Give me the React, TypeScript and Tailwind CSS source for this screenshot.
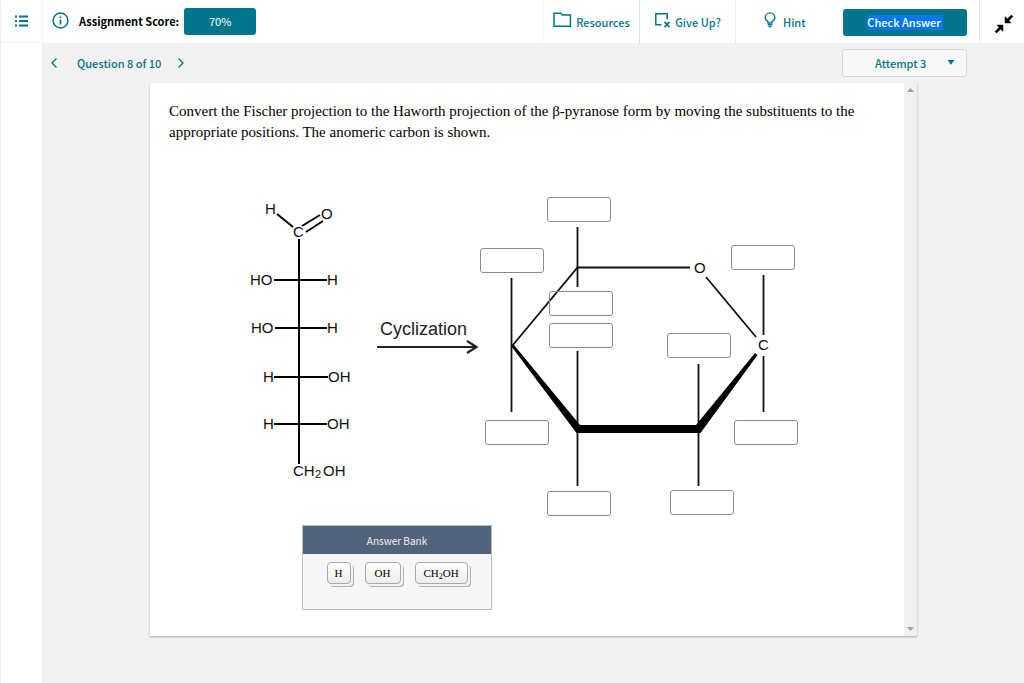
import React, { useState } from "react";

const slots = [
  { id: "c5-top", label: "C5 upper position", pos: "left-[307px] top-[7px]" },
  { id: "c4-top", label: "C4 upper position", pos: "left-[240px] top-[58px]" },
  { id: "c5-bottom", label: "C5 lower position", pos: "left-[309px] top-[101px]" },
  { id: "c3-top", label: "C3 upper position", pos: "left-[309px] top-[133px]" },
  { id: "c1-top", label: "C1 upper position", pos: "left-[491px] top-[55px]" },
  { id: "c2-top", label: "C2 upper position", pos: "left-[427px] top-[143px]" },
  { id: "c4-bottom", label: "C4 lower position", pos: "left-[245px] top-[230px]" },
  { id: "c1-bottom", label: "C1 lower position", pos: "left-[494px] top-[230px]" },
  { id: "c3-bottom", label: "C3 lower position", pos: "left-[307px] top-[301px]" },
  { id: "c2-bottom", label: "C2 lower position", pos: "left-[430px] top-[300px]" },
];

const bank = [
  { id: "h", content: <>H</>, size: "w-6" },
  { id: "oh", content: <>OH</>, size: "w-9" },
  {
    id: "ch2oh",
    content: (
      <>
        CH<sub className="text-[8px]">2</sub>OH
      </>
    ),
    size: "w-[53px]",
  },
];

function Header() {
  return (
    <header className="flex h-[43px] bg-white text-[11px] font-medium text-[#00758c]">
      <div className="flex flex-1 items-center pl-[9px]">
        <svg width="17" height="17" viewBox="0 0 17 17" fill="none" stroke="currentColor" className="mb-0.5">
          <circle cx="8.5" cy="8.5" r="7.4" strokeWidth="1.5" />
          <path d="M8.5 7.5v5M8.5 4.5v1.6" strokeWidth="1.7" />
        </svg>
        <span className="ml-[10px] font-bold text-black">Assignment Score:</span>
        <span className="ml-[5px] flex h-[27px] w-[72px] items-center justify-center rounded-[3px] bg-[#00758c] font-normal text-white">
          70%
        </span>
      </div>

      <nav className="flex">
        <a href="#resources" className="flex w-24 items-center justify-center border-l border-[#f5f5f5]">
          <svg width="19" height="16" viewBox="0 0 19 16" fill="none" stroke="currentColor" strokeWidth="1.5" className="mr-1 mb-1">
            <path d="M1 14.2V1.2h6.8l1.4 1.7h8.2v11.3z" />
          </svg>
          <span className="pt-0.5">Resources</span>
        </a>
        <a href="#give-up" className="flex w-24 items-center justify-center border-l border-[#dfdfdf]">
          <svg width="17" height="17" viewBox="0 0 17 17" fill="none" stroke="currentColor" className="mr-1 mb-0.5">
            <path d="M7.5 12.8H1.8V1.8h11.4v5.4" strokeWidth="1.5" />
            <path d="M10.5 9.8l5 5.4M15.5 9.8l-5 5.4" strokeWidth="1.7" />
          </svg>
          <span className="pt-0.5">Give Up?</span>
        </a>
        <a href="#hint" className="flex w-[108px] items-center border-l border-[#ececec] pl-[28px]">
          <svg width="12" height="16" viewBox="0 0 12 16" fill="none" stroke="currentColor" strokeWidth="1.4" className="mr-[7px] mb-1">
            <path d="M4 11V9.6C2.3 8.8 1.2 7.4 1.2 5.6a4.8 4.7 0 0 1 9.6 0c0 1.8-1.1 3.2-2.8 4V11zM3.8 12.8h4.4M4.5 14.6h3" />
          </svg>
          <span className="pt-0.5">Hint</span>
        </a>
      </nav>

      <div className="flex items-center pr-3">
        <button className="mt-0.5 flex h-[27px] w-[124px] items-center justify-center rounded-[3px] bg-[#00758c] text-white">
          <span className="bg-[#0078eb] pr-0.5 leading-[15px]">Check Answer</span>
        </button>
      </div>
      <button aria-label="Exit full screen" className="flex w-[45px] items-center justify-center border-l border-[#e8e8e8] pt-1 pl-1 text-black">
        <svg width="20" height="20" viewBox="0 0 20 20" fill="currentColor" stroke="currentColor">
          <path d="M11 9V2.5l2.2 2.2L17.5 1l1.5 1.5-4 4.2L17.2 9z" strokeWidth="0.4" />
          <path d="M9 11v6.5l-2.2-2.2L2.5 19 1 17.5l4-4.2L2.8 11z" strokeWidth="0.4" />
        </svg>
      </button>
    </header>
  );
}

function QuestionBar() {
  return (
    <div className="flex h-10 items-center justify-between pr-[57px] pl-[7px] text-[11px] font-medium text-[#00758c]">
      <div className="flex items-center">
        <button aria-label="Previous question">
          <svg width="8" height="12" viewBox="0 0 8 12" fill="none" stroke="currentColor" strokeWidth="1.3">
            <path d="M6.5 1.5L2 6l4.5 4.5" />
          </svg>
        </button>
        <span className="mr-4 ml-[19px]">Question 8 of 10</span>
        <button aria-label="Next question">
          <svg width="8" height="12" viewBox="0 0 8 12" fill="none" stroke="currentColor" strokeWidth="1.3">
            <path d="M1.5 1.5L6 6l-4.5 4.5" />
          </svg>
        </button>
      </div>
      <div className="relative">
        <select
          aria-label="Attempt"
          defaultValue="3"
          className="h-7 w-[125px] appearance-none rounded-[3px] border border-[#d6d6d6] bg-[#f8f8f8] pl-8"
        >
          <option value="1">Attempt 1</option>
          <option value="2">Attempt 2</option>
          <option value="3">Attempt 3</option>
        </select>
        <svg width="8" height="5" viewBox="0 0 8 5" fill="currentColor" className="pointer-events-none absolute top-[11px] right-3">
          <path d="M0.5 0h7L4 4.8z" />
        </svg>
      </div>
    </div>
  );
}

function Structures() {
  return (
    <svg width="574" height="330" viewBox="0 0 574 330" className="font-['Liberation_Sans',Arial,sans-serif] text-[15px]">
      {/* Fischer projection */}
      <g stroke="#000" strokeWidth="2" fill="none">
        <path d="M37 24L53 37M62 36L80 25M66 42L83 31" />
        <path d="M59 49V274M34 90H87M35 138H87M34 187H88M34 234H87" />
      </g>
      <g fill="#111">
        <text x="25" y="24">H</text>
        <text x="81" y="29">O</text>
        <text x="53" y="47">C</text>
        <text x="10" y="95">HO</text>
        <text x="87" y="95">H</text>
        <text x="11" y="143">HO</text>
        <text x="87" y="143">H</text>
        <text x="23" y="192">H</text>
        <text x="88" y="192">OH</text>
        <text x="23" y="239">H</text>
        <text x="87" y="239">OH</text>
        <text x="53" y="286">CH</text>
        <text x="75" y="288" className="text-[11px]">2</text>
        <text x="83" y="286">OH</text>
      </g>

      {/* reaction arrow */}
      <text x="140" y="145" fill="#222" className="text-[18px]">Cyclization</text>
      <path d="M137 157H236M227 151L236.5 157L227 163" stroke="#222" strokeWidth="2.2" fill="none" />

      {/* Haworth ring */}
      <g stroke="#111" strokeWidth="1.8" fill="none">
        <path d="M337.5 37V97M337.5 161V296M458.5 174V296" />
        <path d="M271.5 88V222M523.5 85V145M523.5 166V222" />
        <path d="M450 77.5H337.5L272.5 155.5M466 87L516 147" />
      </g>
      <path d="M272 154.5L274 155L340 235H456L515 163L517.5 165L460.5 243H336.5L271.5 156.5z" fill="#000" />
      <g fill="#111">
        <text x="454" y="83">O</text>
        <text x="518" y="160">C</text>
      </g>
    </svg>
  );
}

function AnswerBank({ selected, onSelect }: { selected: string | null; onSelect: (id: string) => void }) {
  return (
    <section className="mt-[5px] ml-[62px] h-[85px] w-[190px] border border-[#bdbdbd] bg-[#f7f7f7]">
      <h2 className="flex h-7 items-center justify-center bg-[#50637b] text-[10px] text-[#f0f2f5]">Answer Bank</h2>
      <div className="mt-2 flex justify-center gap-[14px] font-['Liberation_Serif',serif] text-[11px] text-black">
        {bank.map((item) => (
          <button
            key={item.id}
            onClick={() => onSelect(item.id)}
            aria-pressed={selected === item.id}
            className={`${item.size} h-[22px] rounded-[4px] border border-[#a9a9a9] bg-linear-to-b from-white to-[#ececec] leading-4 shadow-[1px_1px_0_0_#f4f4f4,2px_2px_0_0_#f4f4f4,3px_3px_0_0_#b0b0b0]`}
          >
            {item.content}
          </button>
        ))}
      </div>
    </section>
  );
}

export default function App() {
  const [selected, setSelected] = useState<string | null>(null);
  const [placed, setPlaced] = useState<Record<string, string>>({});

  const place = (slot: string) => {
    if (!selected) return;
    setPlaced({ ...placed, [slot]: selected });
    setSelected(null);
  };

  return (
    <div className="flex min-h-screen bg-[#f2f2f2] font-['Noto_Sans_CJK_SC','Open_Sans',sans-serif]">
      <aside className="w-[43px] shrink-0 border-x border-[#f0f0f0] bg-white">
        <div className="flex h-[43px] items-center justify-center border-b border-[#f5f5f5]">
          <button aria-label="Question list" className="text-[#00758c]">
            <svg width="13" height="12" viewBox="0 0 13 12" fill="none" stroke="currentColor" strokeWidth="2">
              <path d="M0 1.5h2M0 6h2M0 10.5h2M4 1.5h9M4 6h9M4 10.5h9" />
            </svg>
          </button>
        </div>
      </aside>

      <div className="min-w-0 flex-1">
        <Header />
        <QuestionBar />

        <main className="mx-auto flex max-w-[767px] bg-white shadow-[0_1px_2px_0_rgba(0,0,0,0.3)]">
          <div className="min-w-0 flex-1 pt-[18px] pb-[26px]">
            <p className="px-[19px] font-['Liberation_Serif',serif] text-[15px] leading-[21px] text-black">
              Convert the Fischer projection to the Haworth projection of the β-pyranose form by moving the substituents to
              the appropriate positions. The anomeric carbon is shown.
            </p>
            <div className="mx-auto mt-[47px] w-[574px]">
              <div className="relative">
                <Structures />
                {slots.map((slot) => (
                  <button
                    key={slot.id}
                    aria-label={slot.label}
                    onClick={() => place(slot.id)}
                    className={`absolute h-[25px] w-16 rounded-[3px] border border-[#8c8c8c] font-['Liberation_Serif',serif] text-[12px] leading-4 ${slot.pos}`}
                  >
                    {bank.find((item) => item.id === placed[slot.id])?.content}
                  </button>
                ))}
              </div>
              <AnswerBank selected={selected} onSelect={setSelected} />
            </div>
          </div>

          <div className="flex w-[13px] flex-col items-center justify-between bg-[#f0f0f0] py-[5px] text-[#a0a0a0]">
            <button aria-label="Scroll up">
              <svg width="7" height="4" viewBox="0 0 7 4" fill="currentColor">
                <path d="M3.5 0L7 4H0z" />
              </svg>
            </button>
            <button aria-label="Scroll down">
              <svg width="7" height="4" viewBox="0 0 7 4" fill="currentColor">
                <path d="M0 0h7L3.5 4z" />
              </svg>
            </button>
          </div>
        </main>
      </div>
    </div>
  );
}
